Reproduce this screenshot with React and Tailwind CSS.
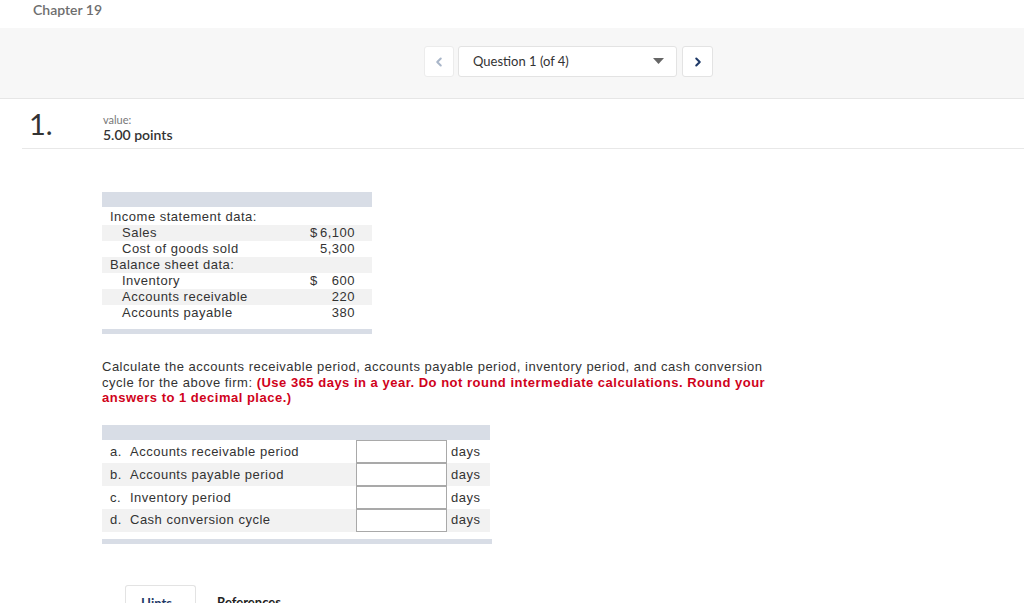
import { ChevronLeft, ChevronRight } from 'lucide-react';

const incomeRows = [
    { label: 'Income statement data:', indent: false, shade: false },
    { label: 'Sales', indent: true, shade: true, cur: '$', val: '6,100' },
    { label: 'Cost of goods sold', indent: true, shade: false, val: '5,300' },
    { label: 'Balance sheet data:', indent: false, shade: true },
    { label: 'Inventory', indent: true, shade: false, cur: '$', val: '600' },
    { label: 'Accounts receivable', indent: true, shade: true, val: '220' },
    { label: 'Accounts payable', indent: true, shade: false, val: '380' },
];

const answerRows = [
    { letter: 'a.', label: 'Accounts receivable period', shade: false },
    { letter: 'b.', label: 'Accounts payable period', shade: true },
    { letter: 'c.', label: 'Inventory period', shade: false },
    { letter: 'd.', label: 'Cash conversion cycle', shade: true },
];

export default function App() {
    return (
        <div className="min-h-[603px] bg-white overflow-hidden" style={{ fontFamily: 'Lato, sans-serif' }}>
            {/* Chapter title */}
            <div className="h-[28px] pl-[33px] pt-[1px] text-[14px] font-semibold text-[#6e6e6e] leading-[18px]">Chapter 19</div>

            {/* Question nav */}
            <div className="h-[71px] bg-[#f7f7f7] border-b border-[#e6e6e6] flex items-start pt-[18px] pl-[424px]">
                <button className="w-[30px] h-[31px] bg-white border border-[#ececec] rounded-[3px] flex items-center justify-center">
                    <ChevronLeft size={14} strokeWidth={3.5} className="text-[#a9b6c9]" />
                </button>
                <div className="ml-[4px] w-[219px] h-[31px] bg-white border border-[#e3e3e3] rounded-[3px] flex items-center pl-[14px] pr-[12px]">
                    <span className="text-[13px] text-[#333] flex-1">Question 1 (of 4)</span>
                    <svg width="11" height="7" viewBox="0 0 11 7"><path d="M0 0 L11 0 L5.5 6 Z" fill="#666" /></svg>
                </div>
                <button className="ml-[5px] w-[31px] h-[31px] bg-white border border-[#e3e3e3] rounded-[3px] flex items-center justify-center">
                    <ChevronRight size={14} strokeWidth={3.5} className="text-[#1f3a68]" />
                </button>
            </div>

            {/* Question header */}
            <div className="ml-[22px] h-[50px] border-b border-[#e8e8e8] flex">
                <div className="w-[81px] pl-[7px] pt-[8px] text-[29px] leading-[34px] text-[#333]">1.</div>
                <div className="pt-[15px]">
                    <div className="text-[11px] leading-[12px] text-[#777]">value:</div>
                    <div className="text-[14px] leading-[18px] text-[#333] font-semibold">5.00 points</div>
                </div>
            </div>

            <div className="pl-[102px] tracking-[0.5px]" style={{ fontFamily: '"Liberation Sans", Arial, sans-serif' }}>
                {/* Data table */}
                <div className="mt-[43px] w-[270px]">
                    <div className="h-[15px] bg-[#d8dde6]" />
                    <div className="mt-[2px]">
                        {incomeRows.map((r) => (
                            <div key={r.label} className={`h-[16px] flex items-center text-[13px] text-[#333] ${r.shade ? 'bg-[#f2f2f2]' : ''}`}>
                                <span className={`flex-1 ${r.indent ? 'pl-[20px]' : 'pl-[8px]'}`}>{r.label}</span>
                                <span className="w-[8px] text-left">{r.cur || ''}</span>
                                <span className="w-[54px] text-right pr-[17px]">{r.val || ''}</span>
                            </div>
                        ))}
                    </div>
                    <div className="mt-[8px] h-[5px] bg-[#d8dde6]" />
                </div>

                {/* Question text */}
                <p className="mt-[25px] w-[672px] text-[13px] leading-[15.5px] text-[#333]">
                    Calculate the accounts receivable period, accounts payable period, inventory period, and cash conversion cycle for the above firm:{' '}
                    <span className="font-bold text-[#d0021b]">(Use 365 days in a year. Do not round intermediate calculations. Round your answers to 1 decimal place.)</span>
                </p>

                {/* Answer table */}
                <div className="mt-[19px] w-[388px]">
                    <div className="h-[15px] bg-[#d8dde6]" />
                    <div className="pt-[1px]">
                        {answerRows.map((r) => (
                            <div key={r.letter} className={`h-[22.75px] flex items-center text-[13px] text-[#333] ${r.shade ? 'bg-[#f2f2f2]' : ''}`}>
                                <span className="w-[28px] pl-[8px]">{r.letter}</span>
                                <span className="w-[226px]">{r.label}</span>
                                <input className="w-[91px] h-[23px] bg-white border border-[#a9a9a9] outline-none" />
                                <span className="pl-[4px]">days</span>
                            </div>
                        ))}
                    </div>
                    <div className="mt-[7px] h-[5px] bg-[#d8dde6] w-[390px]" />
                </div>

                {/* Tabs */}
                <div className="mt-[41px] flex items-end tracking-normal" style={{ fontFamily: 'Lato, sans-serif' }}>
                    <div className="ml-[23px] w-[71px] h-[30px] border border-[#e3e3e3] border-b-0 rounded-t-[3px] pl-[15px] pt-[8px] text-[13px] font-bold text-[#1f3a68]">Hints</div>
                    <div className="ml-[21px] h-[30px] pt-[8px] text-[13px] font-bold text-[#222]">References</div>
                </div>
            </div>
        </div>
    );
}
